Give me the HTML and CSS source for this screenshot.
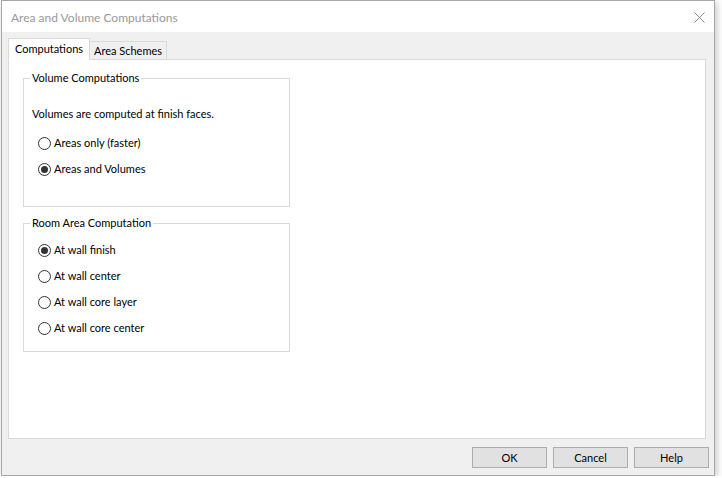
FILE: index.html
```html
<!DOCTYPE html>
<html>
<head>
<meta charset="utf-8">
<link rel="stylesheet" href="styles.css">
</head>
<body>
<div class="window">
  <div class="titlebar">
    <span class="title">Area and Volume Computations</span>
    <svg class="close" width="11" height="11" viewBox="0 0 11 11"><path d="M0.5 0.5 L10.5 10.5 M10.5 0.5 L0.5 10.5" stroke="#8a8a8a" stroke-width="1" fill="none"/></svg>
  </div>
  <div class="client">
    <div class="tabs">
      <div class="tab active">Computations</div>
      <div class="tab">Area Schemes</div>
    </div>
    <div class="panel">
      <fieldset class="group g1">
        <legend>Volume Computations</legend>
        <div class="row note">Volumes are computed at finish faces.</div>
        <div class="row radio"><span class="dot"></span>Areas only (faster)</div>
        <div class="row radio"><span class="dot on"></span>Areas and Volumes</div>
      </fieldset>
      <fieldset class="group g2">
        <legend>Room Area Computation</legend>
        <div class="row radio"><span class="dot on"></span>At wall finish</div>
        <div class="row radio"><span class="dot"></span>At wall center</div>
        <div class="row radio"><span class="dot"></span>At wall core layer</div>
        <div class="row radio"><span class="dot"></span>At wall core center</div>
      </fieldset>
    </div>
    <div class="footer">
      <button class="btn">OK</button>
      <button class="btn">Cancel</button>
      <button class="btn">Help</button>
    </div>
  </div>
</div>
</body>
</html>
```
FILE: styles.css
```css
html, body {
  margin: 0;
  padding: 0;
  background: #ffffff;
}
body {
  font-family: Lato, "Noto Sans", sans-serif;
  font-size: 11px;
  color: #000;
}
.window {
  box-sizing: border-box;
  margin-left: 1px;
  width: 714px;
  height: 476px;
  border: 1px solid #a6a6a6;
  background: #f0f0f0;
  box-shadow: 2px 2px 7px rgba(0,0,0,0.22);
  display: flex;
  flex-direction: column;
}
.titlebar {
  height: 31px;
  background: #ffffff;
  display: flex;
  align-items: center;
  justify-content: space-between;
  padding: 0 9px 0 9px;
  flex: none;
}
.title {
  color: #999999;
  font-size: 12px;
  padding-top: 1px;
}
.close {
  display: block;
  margin-top: 1px;
}
.client {
  flex: 1;
  display: flex;
  flex-direction: column;
  padding: 6px 8px 0 6px;
}
.tabs {
  display: flex;
  align-items: flex-end;
  height: 22px;
  margin-bottom: -1px;
  position: relative;
  z-index: 1;
}
.tab {
  box-sizing: border-box;
  width: 77px;
  height: 19px;
  line-height: 18px;
  text-align: center;
  border: 1px solid #d9d9d9;
  border-left: none;
  background: #f0f0f0;
}
.tab.active {
  width: 82px;
  height: 22px;
  line-height: 19px;
  border-left: 1px solid #d9d9d9;
  border-bottom: 1px solid #ffffff;
  background: #ffffff;
}
.panel {
  box-sizing: border-box;
  height: 380px;
  background: #ffffff;
  border: 1px solid #d9d9d9;
  padding: 10px 0 0 14px;
}
.group {
  box-sizing: border-box;
  width: 267px;
  margin: 0;
  border: 1px solid #d9d9d9;
  padding: 0 8px;
  min-width: 0;
}
.group legend {
  padding: 0 2px;
  margin-left: -2px;
  line-height: 16px;
}
.g1 {
  padding-top: 15px;
  padding-bottom: 24px;
}
.g2 {
  margin-top: 8px;
  padding-top: 6px;
  padding-bottom: 10px;
}
.row {
  height: 26px;
  line-height: 26px;
  white-space: nowrap;
}
.note {
  margin-bottom: 3px;
}
.radio {
  display: flex;
  align-items: center;
  padding-left: 6px;
}
.dot {
  box-sizing: border-box;
  width: 13px;
  height: 13px;
  border: 1px solid #333333;
  border-radius: 50%;
  background: #ffffff;
  margin-right: 3px;
  display: flex;
  align-items: center;
  justify-content: center;
  flex: none;
}
.dot.on::after {
  content: "";
  width: 7px;
  height: 7px;
  border-radius: 50%;
  background: #333333;
}
.footer {
  flex: 1;
  display: flex;
  justify-content: flex-end;
  align-items: flex-start;
  gap: 6px;
  padding-top: 8px;
  margin-right: -3px;
}
.btn {
  box-sizing: border-box;
  width: 75px;
  height: 21px;
  border: 1px solid #adadad;
  background: #e1e1e1;
  font-family: inherit;
  font-size: 11px;
  color: #000;
  padding: 0;
  margin: 0;
}
```
